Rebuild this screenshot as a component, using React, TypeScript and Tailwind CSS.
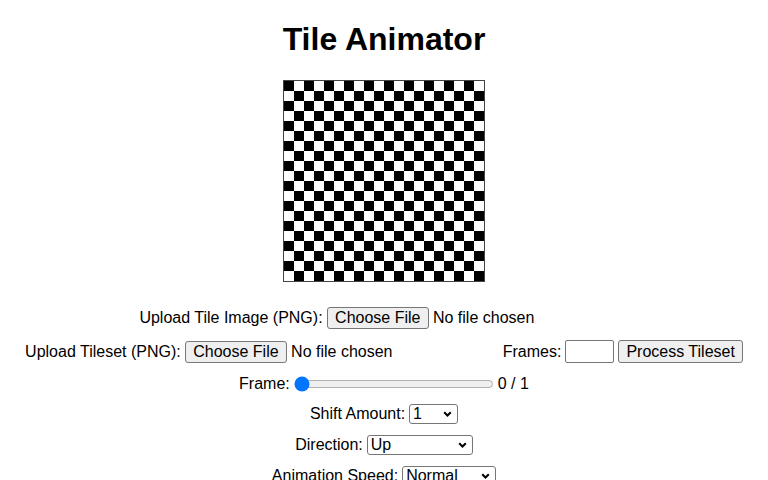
import { useState } from 'react'

function Chevron() {
  return (
    <svg
      className="pointer-events-none absolute right-[6px] top-1/2 h-[8px] w-[9px] -translate-y-1/2"
      viewBox="0 0 9 8"
      fill="none"
    >
      <path d="M1.2 2.2 L4.5 5.5 L7.8 2.2" stroke="#000" strokeWidth="2" />
    </svg>
  )
}

function Select({ width, value, options, onChange }: {
  width: string
  value: string
  options: string[]
  onChange: (v: string) => void
}) {
  return (
    <span className="relative inline-flex">
      <select
        value={value}
        onChange={(e) => onChange(e.target.value)}
        className={`${width} h-[20px] appearance-none rounded-[3px] border border-[#767676] bg-white pl-[3px] text-[16px] leading-[18px] text-black`}
      >
        {options.map((o) => (
          <option key={o} value={o}>{o}</option>
        ))}
      </select>
      <Chevron />
    </span>
  )
}

function Checkerboard() {
  return (
    <div className="border border-[#444]">
      <svg width="200" height="200" viewBox="0 0 200 200" className="block">
        <defs>
          <pattern id="checks" width="20" height="20" patternUnits="userSpaceOnUse">
            <rect width="20" height="20" fill="#fff" />
            <rect x="0" y="0" width="10" height="10" fill="#000" />
            <rect x="10" y="10" width="10" height="10" fill="#000" />
          </pattern>
        </defs>
        <rect width="200" height="200" fill="url(#checks)" />
      </svg>
    </div>
  )
}

const fileInput =
  'w-[302px] text-[16px] leading-[normal] text-black file:mr-[4px] file:rounded-[3px] file:border file:border-[#767676] file:bg-[#efefef] file:px-[7.5px] file:py-[1px] file:text-black'

export default function App() {
  const [shift, setShift] = useState('1')
  const [direction, setDirection] = useState('Up')
  const [speed, setSpeed] = useState('Normal')
  const [frames, setFrames] = useState('')

  return (
    <div className="min-h-[480px] bg-white font-['Liberation_Sans',Arial,sans-serif] text-[16px] leading-[normal] text-black">
      <h1 className="pt-[21px] text-center text-[32px] font-bold leading-[37px]">Tile Animator</h1>

      <div className="mt-[22px] flex justify-center">
        <Checkerboard />
      </div>

      <div className="mt-[24px] flex h-[23px] items-center justify-center gap-[4px]">
        <label>Upload Tile Image (PNG):</label>
        <input type="file" accept="image/png" className={fileInput} />
      </div>

      <div className="mt-[11px] flex h-[23px] items-center justify-center gap-[4px]">
        <label>Upload Tileset (PNG):</label>
        <input type="file" accept="image/png" className={fileInput} />
        <label className="ml-[12px]">Frames:</label>
        <input
          type="number"
          value={frames}
          onChange={(e) => setFrames(e.target.value)}
          className="h-[23px] w-[49px] rounded-[2px] border border-[#767676] bg-white px-[2px] text-[16px]"
        />
        <button className="h-[23px] rounded-[3px] border border-[#767676] bg-[#efefef] px-[7px] text-[16px] leading-[normal]">
          Process Tileset
        </button>
      </div>

      <div className="mt-[11px] flex h-[20px] items-center justify-center gap-[4px]">
        <label>Frame:</label>
        <input type="range" min={0} max={1} defaultValue={0} className="w-[200px] accent-[#0075ff]" />
        <span>0 / 1</span>
      </div>

      <div className="mt-[10px] flex h-[20px] items-center justify-center gap-[4px]">
        <label>Shift Amount:</label>
        <Select width="w-[49px]" value={shift} options={['1', '2', '4', '8']} onChange={setShift} />
      </div>

      <div className="mt-[11px] flex h-[20px] items-center justify-center gap-[4px]">
        <label>Direction:</label>
        <Select width="w-[106px]" value={direction} options={['Up', 'Down', 'Left', 'Right']} onChange={setDirection} />
      </div>

      <div className="mt-[11px] flex h-[20px] items-center justify-center gap-[4px]">
        <label>Animation Speed:</label>
        <Select width="w-[94px]" value={speed} options={['Slow', 'Normal', 'Fast']} onChange={setSpeed} />
      </div>
    </div>
  )
}
